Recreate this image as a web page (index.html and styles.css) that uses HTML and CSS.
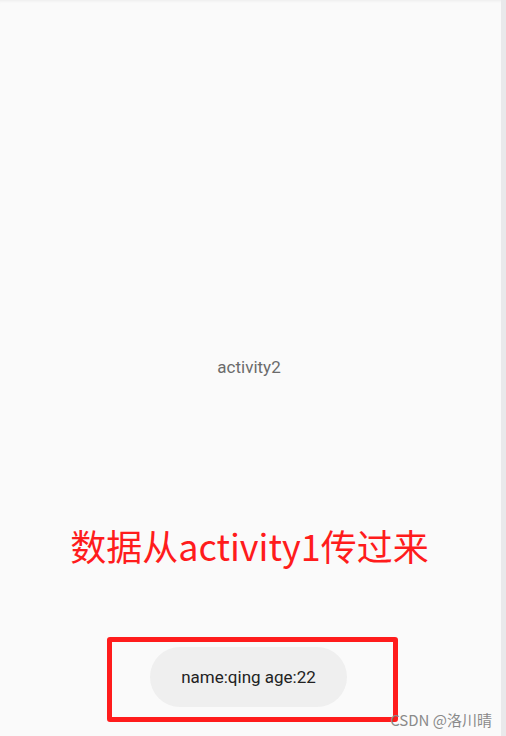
FILE: index.html
```html
<!DOCTYPE html>
<html>
<head>
  <meta charset="utf-8">
  <title>activity2</title>
  <meta name="viewport" content="width=device-width, initial-scale=1">
  <link rel="stylesheet" href="styles.css">
</head>
<body>
  <div class="screen">
    <p class="label">activity2</p>
    <p class="note">数据从activity1传过来</p>
    <div class="frame">
      <div class="pill">name:qing age:22</div>
    </div>
    <span class="mark">CSDN @洛川晴</span>
  </div>
</body>
</html>
```

FILE: styles.css
```css
html {
  font-family: Roboto, "Noto Sans", sans-serif;
}
body {
  margin: 0;
  background-color: #e9e9eb;
  overflow: hidden;
}
.screen {
  position: relative;
  width: 501px;
  height: 736px;
  background-color: #fafafa;
  box-shadow: inset 0 3px 3px -2px rgba(0,0,0,.06);
  display: flex;
  flex-direction: column;
  align-items: center;
}
.label {
  margin: 357px 3px 0 0;
  font-size: 17px;
  line-height: 20px;
  color: #6b6b6b;
}
.note {
  margin: 146px 2px 0 0;
  font-family: "Noto Sans CJK SC", sans-serif;
  font-size: 36px;
  line-height: 44px;
  color: #ff1c1c;
}
.frame {
  align-self: flex-start;
  margin: 70px 0 0 107px;
  width: 243px;
  height: 70px;
  border: 5px solid #ff1c1c;
  border-radius: 3px;
  padding: 5px 0 0 38px;
}
.pill {
  width: 197px;
  height: 60px;
  border-radius: 30px;
  background-color: #efefef;
  display: flex;
  align-items: center;
  justify-content: center;
  font-size: 17px;
  color: #222;
}
.mark {
  position: absolute;
  right: 9px;
  bottom: 6px;
  font-family: "Noto Sans CJK SC", sans-serif;
  font-size: 15px;
  color: #8a8a8a;
}
```
